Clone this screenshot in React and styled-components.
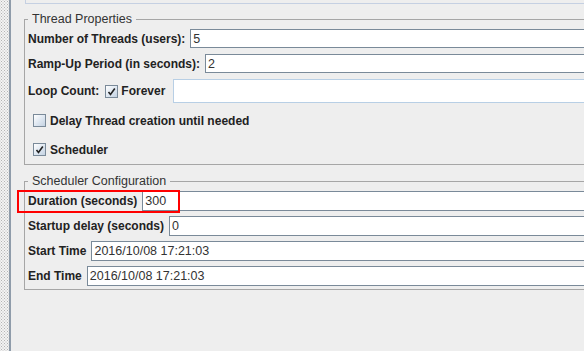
import React from "react";
import styled, { createGlobalStyle } from "styled-components";

const GlobalStyle = createGlobalStyle`
  html, body {
    margin: 0;
    padding: 0;
    background: #eeeeee;
  }
  * {
    box-sizing: border-box;
  }
`;

const Screen = styled.div`
  display: flex;
  width: 584px;
  height: 351px;
  overflow: hidden;
  background: #eeeeee;
  font-family: "Liberation Sans", Arial, sans-serif;
  font-size: 12px;
  color: #222222;
`;

const Divider = styled.div`
  flex: 0 0 11px;
  background-color: #f3f3f3;
  background-image: radial-gradient(circle, #b4b4b4 0.7px, transparent 0.9px),
    radial-gradient(circle, #b4b4b4 0.7px, transparent 0.9px);
  background-size: 3px 3px;
  background-position: 0 0, 1.5px 1.5px;
  border-right: 2px solid #8f9caa;
`;

const Main = styled.div`
  flex: 1;
  display: flex;
  flex-direction: column;
  padding-left: 13px;
  margin-right: -20px;
`;

const TopStub = styled.div`
  height: 4px;
  margin-left: 1px;
  border-left: 1px solid #c5d0e2;
  border-bottom: 1px solid #c5d0e2;
`;

const Group = styled.fieldset`
  margin: ${(p) => p.$top}px 0 0 0;
  padding: ${(p) => p.$padTop}px 0 ${(p) => p.$padBottom}px 3px;
  border: 1px solid #a6a6a6;
  display: flex;
  flex-direction: column;
  gap: ${(p) => p.$gap}px;
  min-width: 0;
`;

const Title = styled.legend`
  padding: 0 4px;
  margin: 0;
  font-size: 12.5px;
  line-height: 14px;
  color: #333333;
`;

const Row = styled.div`
  position: relative;
  display: flex;
  align-items: center;
  height: ${(p) => p.$h}px;
  gap: ${(p) => p.$gap ?? 5}px;
`;

const Label = styled.span`
  font-weight: bold;
  white-space: nowrap;
  color: #222222;
  padding-left: ${(p) => p.$indent ?? 0}px;
`;

const Field = styled.div`
  flex: 1;
  align-self: stretch;
  display: flex;
  align-items: center;
  padding-left: 2px;
  background: #ffffff;
  border: 1px solid ${(p) => (p.$soft ? "#b8cfe5" : "#7a8a99")};
  font-size: 12.5px;
  color: #333333;
  white-space: nowrap;
`;

const Box = styled.span`
  flex: 0 0 13px;
  width: 13px;
  height: 13px;
  margin-left: ${(p) => p.$ml ?? 0}px;
  border: 1px solid #7a8a99;
  background: linear-gradient(135deg, #ffffff 0%, #dde6f0 55%, #c4d2e2 100%);
  display: flex;
  align-items: center;
  justify-content: center;
`;

const Highlight = styled.div`
  position: absolute;
  left: -11px;
  top: -1px;
  width: 163px;
  height: 23px;
  border: 2px solid #ff0000;
  pointer-events: none;
`;

const Check = ({ checked, ml }) => (
  <Box $ml={ml}>
    {checked && (
      <svg width="9" height="9" viewBox="0 0 9 9">
        <path d="M1.5 5 L3.5 7.5 L7.8 1.5" fill="none" stroke="#222" strokeWidth="1.6" />
      </svg>
    )}
  </Box>
);

const App = () => {
  return (
    <>
      <GlobalStyle />
      <Screen>
        <Divider />
        <Main>
          <TopStub />
          <Group $top={8} $padTop={3} $padBottom={3} $gap={6}>
            <Title>Thread Properties</Title>
            <Row $h={19}>
              <Label>Number of Threads (users):</Label>
              <Field>5</Field>
            </Row>
            <Row $h={19}>
              <Label>Ramp-Up Period (in seconds):</Label>
              <Field>2</Field>
            </Row>
            <Row $h={24} $gap={0}>
              <Label>Loop Count:</Label>
              <Check checked ml={6} />
              <Label $indent={3}>Forever</Label>
              <Field $soft style={{ marginLeft: 8 }} />
            </Row>
            <Row $h={23} $gap={4}>
              <Check ml={5} />
              <Label>Delay Thread creation until needed</Label>
            </Row>
            <Row $h={23} $gap={4}>
              <Check checked ml={5} />
              <Label>Scheduler</Label>
            </Row>
          </Group>
          <Group $top={9} $padTop={3} $padBottom={3} $gap={5}>
            <Title>Scheduler Configuration</Title>
            <Row $h={20}>
              <Label>Duration (seconds)</Label>
              <Field>300</Field>
              <Highlight />
            </Row>
            <Row $h={20}>
              <Label>Startup delay (seconds)</Label>
              <Field>0</Field>
            </Row>
            <Row $h={20}>
              <Label>Start Time</Label>
              <Field>2016/10/08 17:21:03</Field>
            </Row>
            <Row $h={20}>
              <Label>End Time</Label>
              <Field>2016/10/08 17:21:03</Field>
            </Row>
          </Group>
        </Main>
      </Screen>
    </>
  );
};

export default App;
